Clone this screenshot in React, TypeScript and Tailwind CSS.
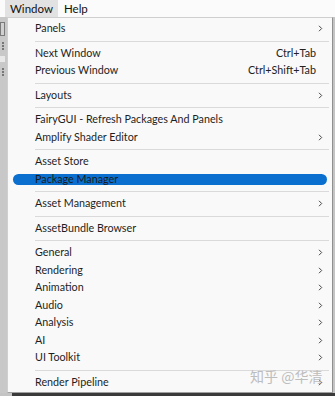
import React from "react";

type Item =
  | { kind: "item"; label: string; shortcut?: string; sub?: boolean; active?: boolean }
  | { kind: "sep" };

const items: Item[] = [
  { kind: "item", label: "Panels", sub: true },
  { kind: "sep" },
  { kind: "item", label: "Next Window", shortcut: "Ctrl+Tab" },
  { kind: "item", label: "Previous Window", shortcut: "Ctrl+Shift+Tab" },
  { kind: "sep" },
  { kind: "item", label: "Layouts", sub: true },
  { kind: "sep" },
  { kind: "item", label: "FairyGUI - Refresh Packages And Panels" },
  { kind: "item", label: "Amplify Shader Editor", sub: true },
  { kind: "sep" },
  { kind: "item", label: "Asset Store" },
  { kind: "item", label: "Package Manager", active: true },
  { kind: "sep" },
  { kind: "item", label: "Asset Management", sub: true },
  { kind: "sep" },
  { kind: "item", label: "AssetBundle Browser" },
  { kind: "sep" },
  { kind: "item", label: "General", sub: true },
  { kind: "item", label: "Rendering", sub: true },
  { kind: "item", label: "Animation", sub: true },
  { kind: "item", label: "Audio", sub: true },
  { kind: "item", label: "Analysis", sub: true },
  { kind: "item", label: "AI", sub: true },
  { kind: "item", label: "UI Toolkit", sub: true },
  { kind: "sep" },
  { kind: "item", label: "Render Pipeline", sub: true },
];

function Chevron() {
  return (
    <svg width="5" height="7" viewBox="0 0 5 7" fill="none">
      <path d="M1 0.8 L3.7 3.5 L1 6.2" stroke="#444" strokeWidth="1" />
    </svg>
  );
}

function Row({ it }: { it: Extract<Item, { kind: "item" }> }) {
  if (it.active) {
    return (
      <div className="h-[17.5px] flex items-center px-[5px]">
        <div className="flex-1 h-[11px] rounded-full bg-[#0a6fcf] flex items-center pl-[22px] pr-[4px]">
          <span className="flex-1 text-[#1a1a1a]">{it.label}</span>
        </div>
      </div>
    );
  }
  return (
    <div className="h-[17.5px] flex items-center pl-[27px] pr-[9px]">
      <span className="flex-1 text-[#1e1e1e] whitespace-nowrap">{it.label}</span>
      {it.shortcut ? <span className="text-[#222]">{it.shortcut}</span> : null}
      <span className="w-[7px] flex justify-end items-center">{it.sub ? <Chevron /> : null}</span>
    </div>
  );
}

export default function App() {
  return (
    <div
      className="w-[335px] h-[396px] bg-[#c4c4c4] flex flex-col relative overflow-hidden text-[10.75px] leading-none"
      style={{ fontFamily: 'Lato, "Liberation Sans", sans-serif' }}
    >
      <div className="h-[17px] bg-[#fbfbfb] flex items-center text-[#111] text-[11.5px]">
        <div className="ml-[5px] px-[5px] h-full bg-[#e2e2e2] flex items-center">Window</div>
        <div className="px-[6px] flex items-center h-full">Help</div>
      </div>
      <div className="flex flex-1">
        <div className="w-[7px] flex flex-col gap-[6px] pt-[5px] bg-[#c8c8c8]">
          <div className="w-[5px] h-[14px] border border-[#7a7a7a] bg-[#d0d0d0]" />
          <div className="w-[3px] h-[8px] ml-[2px] border-l-2 border-dotted border-[#777]" />
          <div className="w-[5px] h-[6px] bg-[#e8e8e8]" />
          <div className="w-[3px] h-[8px] ml-[2px] border-l-2 border-dotted border-[#777]" />
        </div>
        <div className="w-[326px] h-[376px] bg-[#f9f9f9] border border-[#cfcfcf] border-r-[#8f8f8f] border-b-[#a0a0a0] pt-[2px] relative">
          {items.map((it, i) =>
            it.kind === "sep" ? (
              <div key={i} className="h-[7px] flex items-center pl-[27px] pr-[3px]">
                <div className="flex-1 h-px bg-[#dadada]" />
              </div>
            ) : (
              <Row key={i} it={it} />
            )
          )}
          <div
            className="absolute left-[242px] top-[351px] text-[14px] text-[#bdbdbd] whitespace-nowrap"
            style={{ fontFamily: '"Noto Sans CJK SC", sans-serif' }}
          >
            知乎 @华清
          </div>
        </div>
      </div>
      <div className="h-[3px] bg-[#3a3a3a] ml-[12px]" />
    </div>
  );
}
